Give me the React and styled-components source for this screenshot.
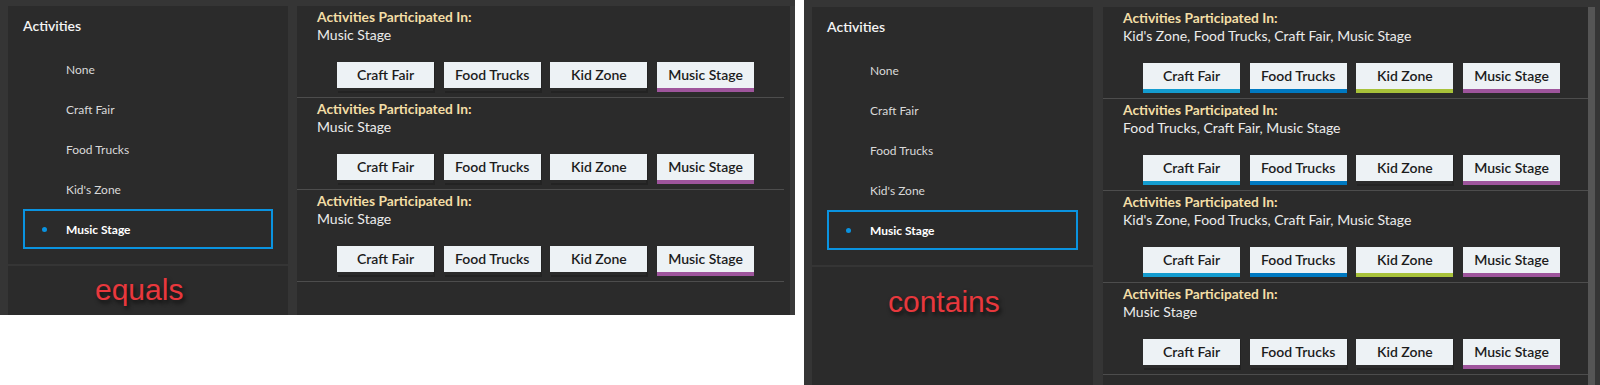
import React from "react";
import styled, { createGlobalStyle } from "styled-components";

const GlobalStyle = createGlobalStyle`
  body {
    margin: 0;
    background: #ffffff;
    font-family: Lato, "Open Sans", sans-serif;
  }
`;

const ACTIVITY_COLORS = {
  "Craft Fair": "#149ccf",
  "Food Trucks": "#0079c1",
  "Kid Zone": "#a8c23a",
  "Music Stage": "#9e559c",
};

const OPTIONS = ["None", "Craft Fair", "Food Trucks", "Kid's Zone", "Music Stage"];

const Page = styled.div`
  display: flex;
  align-items: flex-start;
  gap: 9px;
`;

const Shot = styled.div`
  width: ${(p) => p.$w}px;
  height: ${(p) => p.$h}px;
  box-sizing: border-box;
  padding: ${(p) => p.$pt}px ${(p) => p.$pr}px 0 8px;
  background: #353535;
  display: flex;
  gap: ${(p) => p.$gap}px;
  overflow: hidden;
`;

const Sidebar = styled.div`
  width: ${(p) => p.$w}px;
  flex-shrink: 0;
  display: flex;
  flex-direction: column;
  gap: 2px;
`;

const FilterPanel = styled.div`
  background: #2b2b2b;
  padding: 10px 15px 15px;
`;

const FilterTitle = styled.div`
  color: #f4f4f4;
  font-size: 14px;
  font-weight: 600;
  line-height: 20px;
  margin-bottom: 13px;
`;

const OptionList = styled.div`
  display: flex;
  flex-direction: column;
`;

const Option = styled.div`
  height: 40px;
  box-sizing: border-box;
  display: flex;
  align-items: center;
  padding-left: 17px;
  border: 2px solid ${(p) => (p.$selected ? "#0a93e0" : "transparent")};
  color: ${(p) => (p.$selected ? "#ffffff" : "#d9d9d9")};
  font-size: 12px;
  font-weight: ${(p) => (p.$selected ? 700 : 400)};
`;

const Dot = styled.span`
  width: 5px;
  height: 5px;
  border-radius: 50%;
  background: ${(p) => (p.$on ? "#0a93e0" : "transparent")};
  margin-right: 19px;
  flex-shrink: 0;
`;

const NotePanel = styled.div`
  flex: 1;
  background: #2b2b2b;
  padding: ${(p) => p.$pt}px 0 0 ${(p) => p.$pl}px;
`;

const Note = styled.div`
  font-family: "Liberation Sans", Arial, sans-serif;
  font-size: 30px;
  color: #e8383d;
  text-shadow: 2px 3px 4px rgba(0, 0, 0, 0.7);
`;

const Content = styled.div`
  flex: 1;
  background: #2b2b2b;
  padding-right: ${(p) => p.$inset}px;
`;

const Record = styled.div`
  height: 92px;
  box-sizing: border-box;
  padding: 2px 0 0 20px;
  border-bottom: 1px solid #4d4d4d;
  display: flex;
  flex-direction: column;
`;

const RecordLabel = styled.div`
  color: #f3dea6;
  font-size: 13.8px;
  font-weight: 700;
  line-height: 18px;
`;

const RecordValue = styled.div`
  color: #ececec;
  font-size: 14px;
  line-height: 18px;
`;

const Chips = styled.div`
  display: flex;
  gap: 9.7px;
  margin-top: 18px;
  padding-left: 20px;
`;

const Chip = styled.div`
  width: 97px;
  height: 30px;
  box-sizing: border-box;
  background: #edf2f5;
  background-clip: padding-box;
  border-bottom: 4px solid ${(p) => p.$color || "transparent"};
  color: #1c1c1c;
  font-size: 14px;
  font-weight: 600;
  display: flex;
  align-items: center;
  justify-content: center;
  padding-bottom: 1px;
  box-shadow: ${(p) => (p.$color ? "none" : "1px 1px 0 rgba(0,0,0,0.18)")};
`;

const Scrollbar = styled.div`
  width: ${(p) => p.$w}px;
  flex-shrink: 0;
  margin-left: -${(p) => p.$gap}px;
  background: ${(p) => p.$color};
`;

const Filter = () => (
  <FilterPanel>
    <FilterTitle>Activities</FilterTitle>
    <OptionList>
      {OPTIONS.map((o) => (
        <Option key={o} $selected={o === "Music Stage"}>
          <Dot $on={o === "Music Stage"} />
          {o}
        </Option>
      ))}
    </OptionList>
  </FilterPanel>
);

const Result = ({ picked }) => (
  <Record>
    <RecordLabel>Activities Participated In:</RecordLabel>
    <RecordValue>{picked.join(", ")}</RecordValue>
    <Chips>
      {Object.keys(ACTIVITY_COLORS).map((name) => {
        const on = picked.includes(name === "Kid Zone" ? "Kid's Zone" : name);
        return (
          <Chip key={name} $color={on ? ACTIVITY_COLORS[name] : null}>
            {name}
          </Chip>
        );
      })}
    </Chips>
  </Record>
);

const Screenshot = ({ cfg }) => (
  <Shot $w={cfg.w} $h={cfg.h} $pt={cfg.pt} $pr={cfg.pr} $gap={cfg.gap}>
    <Sidebar $w={cfg.side}>
      <Filter />
      <NotePanel $pt={cfg.notePt} $pl={cfg.notePl}>
        <Note>{cfg.note}</Note>
      </NotePanel>
    </Sidebar>
    <Content $inset={cfg.inset}>
      {cfg.rows.map((r, i) => (
        <Result key={i} picked={r} />
      ))}
    </Content>
    <Scrollbar $w={cfg.scroll} $gap={cfg.gap} $color={cfg.scrollColor} />
  </Shot>
);

const EQUALS = {
  w: 795,
  h: 315,
  pt: 6,
  pr: 0,
  gap: 9,
  side: 280,
  inset: 6,
  scroll: 5,
  scrollColor: "#393939",
  note: "equals",
  notePt: 7,
  notePl: 87,
  rows: [["Music Stage"], ["Music Stage"], ["Music Stage"]],
};

const CONTAINS = {
  w: 796,
  h: 385,
  pt: 7,
  pr: 5,
  gap: 10,
  side: 281,
  inset: 0,
  scroll: 7,
  scrollColor: "#555555",
  note: "contains",
  notePt: 18,
  notePl: 76,
  rows: [
    ["Kid's Zone", "Food Trucks", "Craft Fair", "Music Stage"],
    ["Food Trucks", "Craft Fair", "Music Stage"],
    ["Kid's Zone", "Food Trucks", "Craft Fair", "Music Stage"],
    ["Music Stage"],
  ],
};

export default function App() {
  return (
    <>
      <GlobalStyle />
      <Page>
        <Screenshot cfg={EQUALS} />
        <Screenshot cfg={CONTAINS} />
      </Page>
    </>
  );
}
